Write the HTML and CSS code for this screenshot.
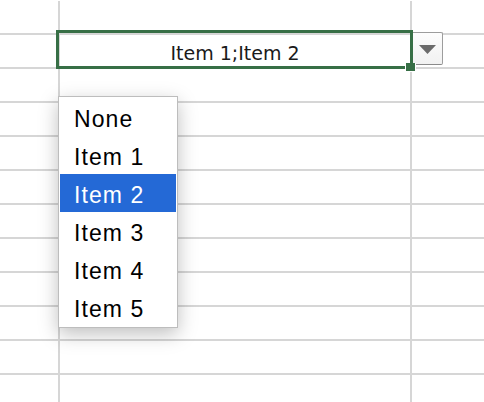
FILE: index.html
```html
<!DOCTYPE html>
<html>
<head>
<meta charset="utf-8">
<link rel="stylesheet" href="styles.css">
</head>
<body>
<div class="sheet">
  <div class="row"><div class="cell a"></div><div class="cell b"></div><div class="cell c"></div></div>
  <div class="row"><div class="cell a"></div><div class="cell b value">Item 1;Item 2</div><div class="cell c"></div></div>
  <div class="row"><div class="cell a"></div><div class="cell b"></div><div class="cell c"></div></div>
  <div class="row"><div class="cell a"></div><div class="cell b"></div><div class="cell c"></div></div>
  <div class="row"><div class="cell a"></div><div class="cell b"></div><div class="cell c"></div></div>
  <div class="row"><div class="cell a"></div><div class="cell b"></div><div class="cell c"></div></div>
  <div class="row"><div class="cell a"></div><div class="cell b"></div><div class="cell c"></div></div>
  <div class="row"><div class="cell a"></div><div class="cell b"></div><div class="cell c"></div></div>
  <div class="row"><div class="cell a"></div><div class="cell b"></div><div class="cell c"></div></div>
  <div class="row"><div class="cell a"></div><div class="cell b"></div><div class="cell c"></div></div>
  <div class="row"><div class="cell a"></div><div class="cell b"></div><div class="cell c"></div></div>
  <div class="row"><div class="cell a"></div><div class="cell b"></div><div class="cell c"></div></div>

  <div class="dd-button">
    <svg width="17" height="9" viewBox="0 0 17 9"><polygon points="0,0 17,0 8.5,9" fill="#6b6b6b"/></svg>
  </div>
  <div class="selection"></div>
  <div class="fill-handle"></div>

  <ul class="list">
    <li class="item">None</li>
    <li class="item">Item 1</li>
    <li class="item selected">Item 2</li>
    <li class="item">Item 3</li>
    <li class="item">Item 4</li>
    <li class="item">Item 5</li>
  </ul>
</div>
</body>
</html>
```

FILE: styles.css
```css
html, body {
  margin: 0;
  padding: 0;
  background: #ffffff;
}

.sheet {
  position: relative;
  width: 484px;
  height: 402px;
  overflow: hidden;
  padding-top: 1px;
  box-sizing: border-box;
}

.row {
  display: flex;
  height: 34px;
  box-sizing: border-box;
  border-bottom: 2px solid #d6d6d6;
}

.cell {
  box-sizing: border-box;
  height: 100%;
}

.cell.a {
  width: 60px;
  border-right: 2px solid #d6d6d6;
}

.cell.b {
  width: 352px;
  border-right: 2px solid #d6d6d6;
}

.cell.c {
  flex: 1;
}

.value {
  font-family: "DejaVu Sans", sans-serif;
  font-size: 19px;
  color: #1a1a1a;
  text-align: center;
  padding-top: 4px;
  line-height: 28px;
}

.dd-button {
  position: absolute;
  left: 411px;
  top: 32px;
  width: 32px;
  height: 33px;
  box-sizing: border-box;
  border: 1px solid #9d9d9d;
  border-bottom-color: #8a8a8a;
  border-radius: 2px;
  background: linear-gradient(#fdfdfd, #f1f1f1);
  display: flex;
  align-items: center;
  justify-content: center;
  padding-top: 1px;
}

.dd-button svg {
  display: block;
}

.selection {
  position: absolute;
  left: 56px;
  top: 30px;
  width: 357px;
  height: 39px;
  box-sizing: border-box;
  border: 3px solid #376f46;
}

.fill-handle {
  position: absolute;
  left: 405px;
  top: 63px;
  width: 11px;
  height: 9px;
  box-sizing: border-box;
  background: #376f46;
  border: 1px solid #ffffff;
  border-top: none;
}

.list {
  position: absolute;
  left: 58px;
  top: 96px;
  width: 120px;
  margin: 0;
  padding: 1px;
  list-style: none;
  box-sizing: border-box;
  background: #ffffff;
  border: 1px solid #bdbdbd;
  box-shadow: 0 6px 18px rgba(0, 0, 0, 0.25);
}

.item {
  height: 38px;
  box-sizing: border-box;
  padding: 4px 0 0 14px;
  line-height: 34px;
  font-family: "Liberation Sans", Arial, sans-serif;
  font-size: 23px;
  letter-spacing: 1.1px;
  color: #000000;
}

.item.selected {
  background: #2469d6;
  color: #ffffff;
}
```
